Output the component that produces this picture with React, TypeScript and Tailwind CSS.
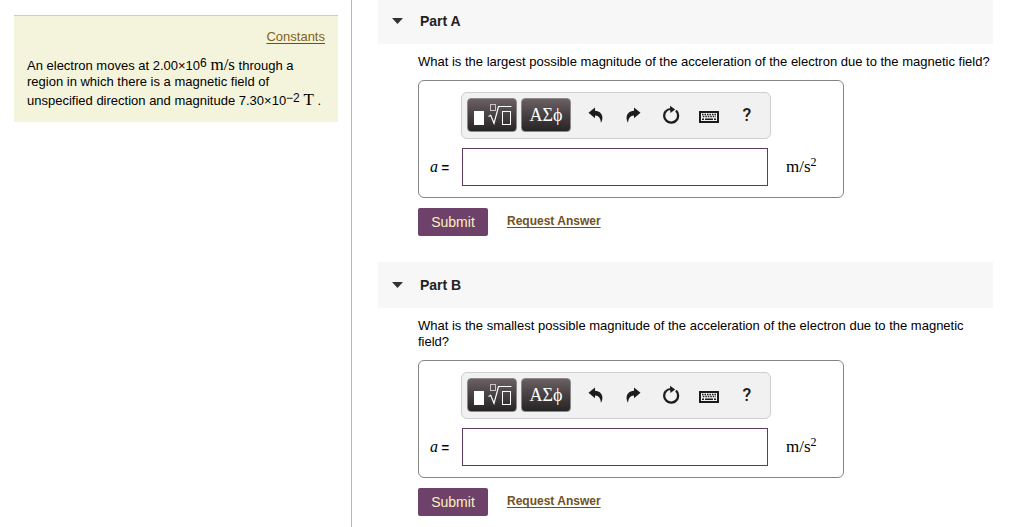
import { useId, useState } from 'react';

interface Part {
  title: string;
  question: string;
}

const PARTS: Part[] = [
  {
    title: 'Part A',
    question: 'What is the largest possible magnitude of the acceleration of the electron due to the magnetic field?',
  },
  {
    title: 'Part B',
    question: 'What is the smallest possible magnitude of the acceleration of the electron due to the magnetic field?',
  },
];

const serifCls = "font-['Liberation_Serif',serif] text-[17px]";
const supCls = 'static align-[3px] text-[12px] leading-4';
const darkBtnCls =
  'flex h-[34px] w-[50px] shrink-0 items-center justify-center rounded border border-[#8c8789] bg-linear-to-b from-[#6b6063] to-[#262425] text-white';
const iconBtnCls = 'flex h-[34px] w-[38px] shrink-0 items-center justify-center text-[#1c1c1c]';

function RootIcon() {
  return (
    <svg width="40" height="22" viewBox="0 0 40 22" fill="none" stroke="currentColor">
      <rect x="2" y="7" width="10" height="14" fill="currentColor" stroke="none" />
      <rect x="18.5" y="0.5" width="5" height="6" stroke="#c9c3c5" />
      <path d="M16.5 12.5l2.2-1.200 3.300 8L26.500 2.500H39.500" strokeWidth="1.200" />
      <rect x="30.5" y="7.5" width="8" height="13" />
    </svg>
  );
}

function UndoIcon() {
  return (
    <svg width="15" height="16" viewBox="0 0 15 16" fill="currentColor">
      <path d="M0.5 5.8L7 0.5v3.3c4.8.3 7.4 3.2 7.4 7.2 0 1.9-.6 3.4-1.5 4.8C12.7 11.5 10.8 8.7 7 8.5v2.8z" />
    </svg>
  );
}

function RedoIcon() {
  return (
    <svg width="15" height="16" viewBox="0 0 15 16" fill="currentColor">
      <path d="M14.500 5.800L8 .5v3.300C3.200 4.100.6 7 .6 11c0 1.900.6 3.400 1.500 4.800C2.300 11.500 4.200 8.700 8 8.500v2.800z" />
    </svg>
  );
}

function ResetIcon() {
  return (
    <svg width="18" height="20" viewBox="0 0 18 20">
      <path d="M3.700 6.200A7 7 0 1 0 14 5.600" fill="none" stroke="currentColor" strokeWidth="2.300" />
      <path d="M3.500 6.600C5 4.800 6.800 4.100 9 4.100" fill="none" stroke="currentColor" strokeWidth="2" />
      <path d="M8 0.700l5.200 3.800L8.400 8z" fill="currentColor" />
    </svg>
  );
}

function KeyboardIcon() {
  return (
    <svg width="20" height="12" viewBox="0 0 20 12" fill="none" stroke="currentColor">
      <rect x="1" y="1" width="18" height="10" strokeWidth="2" />
      <path d="M3 3.500h14" strokeWidth="1.300" strokeDasharray="1.500 1" />
      <path d="M3.800 5.500h13" strokeWidth="1.300" strokeDasharray="1.500 1" />
      <path d="M3 8.200h2M6 8.200h8M15 8.200h2" strokeWidth="1.500" />
    </svg>
  );
}

function Toolbar() {
  return (
    <div role="toolbar" className="flex w-[310px] items-center rounded-md border border-[#cfcfcf] bg-[#f1f1f1] pt-[5px] pb-[6px] pl-[5px]">
      <button type="button" aria-label="Templates" className={darkBtnCls}><RootIcon /></button>
      <button type="button" aria-label="Symbols" className={`${darkBtnCls} ml-1 mr-[5px] font-['Liberation_Serif',serif] text-lg`}>
        ΑΣϕ
      </button>
      <button type="button" aria-label="Undo" className={iconBtnCls}><UndoIcon /></button>
      <button type="button" aria-label="Redo" className={iconBtnCls}><RedoIcon /></button>
      <button type="button" aria-label="Reset" className={iconBtnCls}><ResetIcon /></button>
      <button type="button" aria-label="Keyboard shortcuts" className={`${iconBtnCls} pt-1`}><KeyboardIcon /></button>
      <button type="button" aria-label="Help" className={`${iconBtnCls} font-[Roboto,sans-serif] text-lg font-medium`}>?</button>
    </div>
  );
}

function PartSection({ title, question }: Part) {
  const id = useId();
  const [open, setOpen] = useState(true);
  const [answer, setAnswer] = useState('');

  return (
    <section className="mb-[26px]">
      <h2 className="bg-[#f7f7f7]">
        <button type="button" aria-expanded={open} onClick={() => setOpen(!open)}
          className="flex h-[46px] w-full items-center gap-[17px] pl-[14px] text-sm font-bold text-[#222]">
          <svg width="11" height="6" viewBox="0 0 11 6" fill="#333"><path d="M0 0h11L5.500 6z" /></svg>
          {title}
        </button>
      </h2>

      {open && (
        <form className="pl-10" onSubmit={(e) => e.preventDefault()}>
          <p className="pt-[10px] text-[13px] leading-4">{question}</p>

          <div className="mt-[10px] w-[426px] rounded-md border border-[#858585] py-[11px] pl-[42px]">
            <Toolbar />
            <div className="mt-[9px] -ml-[31px] flex items-center">
              <label htmlFor={id} className="w-8 shrink-0 text-[13px] font-bold">
                <i className="font-['Liberation_Serif',serif] text-base font-normal">a</i> =
              </label>
              <input id={id} type="text" value={answer} onChange={(e) => setAnswer(e.target.value)}
                className="h-[38px] w-[306px] border border-[#5e3c61] bg-white px-2 text-base outline-none" />
              <span className={`ml-[18px] ${serifCls}`}>
                m/s<sup className="-top-1.5 text-[12px]">2</sup>
              </span>
            </div>
          </div>

          <div className="mt-[10px] flex items-center gap-[19px]">
            <button type="submit" className="h-7 w-[70px] rounded-xs bg-[#6d4169] text-sm text-[#fbf0bd]">Submit</button>
            <a href="#" className="pb-0.5 text-xs font-bold text-[#73501d] underline decoration-[#6d4169] underline-offset-2">
              Request Answer
            </a>
          </div>
        </form>
      )}
    </section>
  );
}

export default function App() {
  return (
    <div className="flex h-screen overflow-hidden bg-white font-['Liberation_Sans',Arial,sans-serif] text-black">
      <aside className="w-[352px] shrink-0 border-r border-[#c0b4a2] py-[15px] pr-[13px] pl-[14px]">
        <div className="border-t border-[#c9cdd0] bg-[#f4f4dc] px-[13px] pt-[13px] pb-[13px] text-[13px] leading-4">
          <div className="mb-[10px] text-right">
            <a href="#" className="text-[#806219] underline decoration-[#6d4169] underline-offset-2">Constants</a>
          </div>
          <p>
            An electron moves at 2.00×10<sup className={supCls}>6</sup>{' '}
            <span className={serifCls}>m/s</span> through a region in which there is a magnetic field of
            unspecified direction and magnitude 7.30×10<sup className={supCls}>−2</sup>{' '}
            <span className={serifCls}>T</span> .
          </p>
        </div>
      </aside>

      <main className="-mt-0.5 min-w-0 flex-1 pr-7 pl-[26px]">
        {PARTS.map((part) => <PartSection key={part.title} {...part} />)}
      </main>
    </div>
  );
}
